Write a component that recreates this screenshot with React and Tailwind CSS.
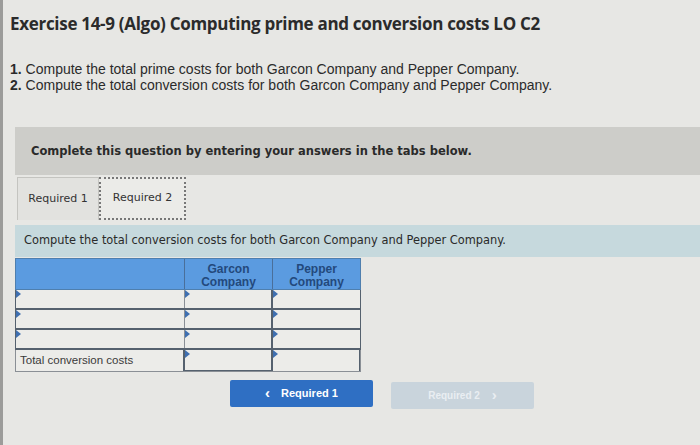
export default function App() {
  const rows = [0, 1, 2];
  const Marker = () => (
    <span className="absolute left-0 top-0 w-0 h-0 border-t-[4px] border-b-[4px] border-l-[5px] border-t-transparent border-b-transparent border-l-[#3f6fb0]" />
  );
  return (
    <div className="w-[700px] h-[445px] bg-[#e7e7e4] relative overflow-hidden flex">
      <div className="w-[3px] h-full bg-[#9c9c9a] shrink-0" />
      <div className="flex-1 flex flex-col">
        <h1 className="mt-[12px] ml-[7px] text-[17px] font-bold text-[#2b2b2b] font-['Open_Sans',sans-serif] tracking-[-0.3px] leading-[24px]">
          Exercise 14-9 (Algo) Computing prime and conversion costs LO C2
        </h1>
        <div className="mt-[25px] ml-[7px] text-[14px] leading-[16px] text-[#2b2b2b] font-['Liberation_Sans',sans-serif]">
          <div><span className="font-bold">1.</span> Compute the total prime costs for both Garcon Company and Pepper Company.</div>
          <div><span className="font-bold">2.</span> Compute the total conversion costs for both Garcon Company and Pepper Company.</div>
        </div>
        <div className="mt-[34px] ml-[12px] h-[48px] bg-[#cdcdc9] flex items-center pl-[16px] pt-[2px]">
          <span className="font-['DejaVu_Sans',sans-serif] font-bold text-[11.5px] text-[#2a2a2a]">
            Complete this question by entering your answers in the tabs below.
          </span>
        </div>
        <div className="ml-[14px] mt-[2px] flex h-[43px]">
          <div className="w-[82px] border border-[#c4c4c0] border-b-0 bg-[#e2e2df] flex items-center justify-center font-['DejaVu_Sans',sans-serif] text-[11px] text-[#333]">
            Required 1
          </div>
          <div className="w-[87px] border-2 border-dotted border-[#777] bg-[#ebebe8] flex items-center justify-center font-['DejaVu_Sans',sans-serif] text-[11px] text-[#333]">
            Required 2
          </div>
        </div>
        <div className="ml-[12px] mt-[5px] h-[32px] bg-[#c6d9dd] flex items-center pl-[9px]">
          <span className="font-['DejaVu_Sans',sans-serif] text-[11.4px] text-[#2a2a2a]">
            Compute the total conversion costs for both Garcon Company and Pepper Company.
          </span>
        </div>
        <div className="ml-[12px] mt-[1px] w-[346px] font-['Liberation_Sans',sans-serif]">
          <div className="flex h-[32px] bg-[#5b9be0] border border-[#4f7fae]">
            <div className="w-[169px] border-r border-[#4a6f9a]" />
            <div className="w-[88px] border-r border-[#4a6f9a] flex items-center justify-center text-center text-[12px] leading-[13px] font-bold text-[#23497c] pt-[3px]">
              Garcon<br />Company
            </div>
            <div className="flex-1 flex items-center justify-center text-center text-[12px] leading-[13px] font-bold text-[#23497c] pt-[4px]">
              Pepper<br />Company
            </div>
          </div>
          {rows.map((r) => (
            <div key={r} className="flex h-[20px] bg-[#ecece9] border-x border-b-2 border-[#55616e]">
              <div className="relative w-[169px] border-r border-[#8a8f95]"><Marker /></div>
              <div className="relative w-[88px] border-r-2 border-[#55616e]"><Marker /></div>
              <div className="relative flex-1"><Marker /></div>
            </div>
          ))}
          <div className="flex h-[22px] bg-[#ecece9] border-x border-b border-[#8a8f95]">
            <div className="w-[169px] border-r-2 border-[#55616e] flex items-center pl-[4px] text-[11.5px] text-[#3a3a3a]">
              Total conversion costs
            </div>
            <div className="relative w-[88px] border-r-2 border-[#55616e] border-b border-b-[#55616e]"><Marker /></div>
            <div className="relative flex-1 border-r border-[#55616e]"><Marker /></div>
          </div>
        </div>
        <div className="flex mt-[8px] ml-[227px] gap-[18px] font-['Liberation_Sans',sans-serif]">
          <div className="w-[143px] h-[27px] bg-[#2f6fc3] rounded-[2px] flex items-center justify-center gap-[11px] text-white text-[11px] font-bold">
            <span className="text-[15px] font-bold leading-none -mt-[2px]">‹</span>
            <span>Required 1</span>
          </div>
          <div className="mt-[2px] w-[143px] h-[27px] bg-[#c9d4dc] rounded-[2px] flex items-center justify-center gap-[12px] text-[#e9eef2] text-[10px] font-bold">
            <span>Required 2</span>
            <span className="text-[15px] leading-none -mt-[2px]">›</span>
          </div>
        </div>
      </div>
    </div>
  );
}
